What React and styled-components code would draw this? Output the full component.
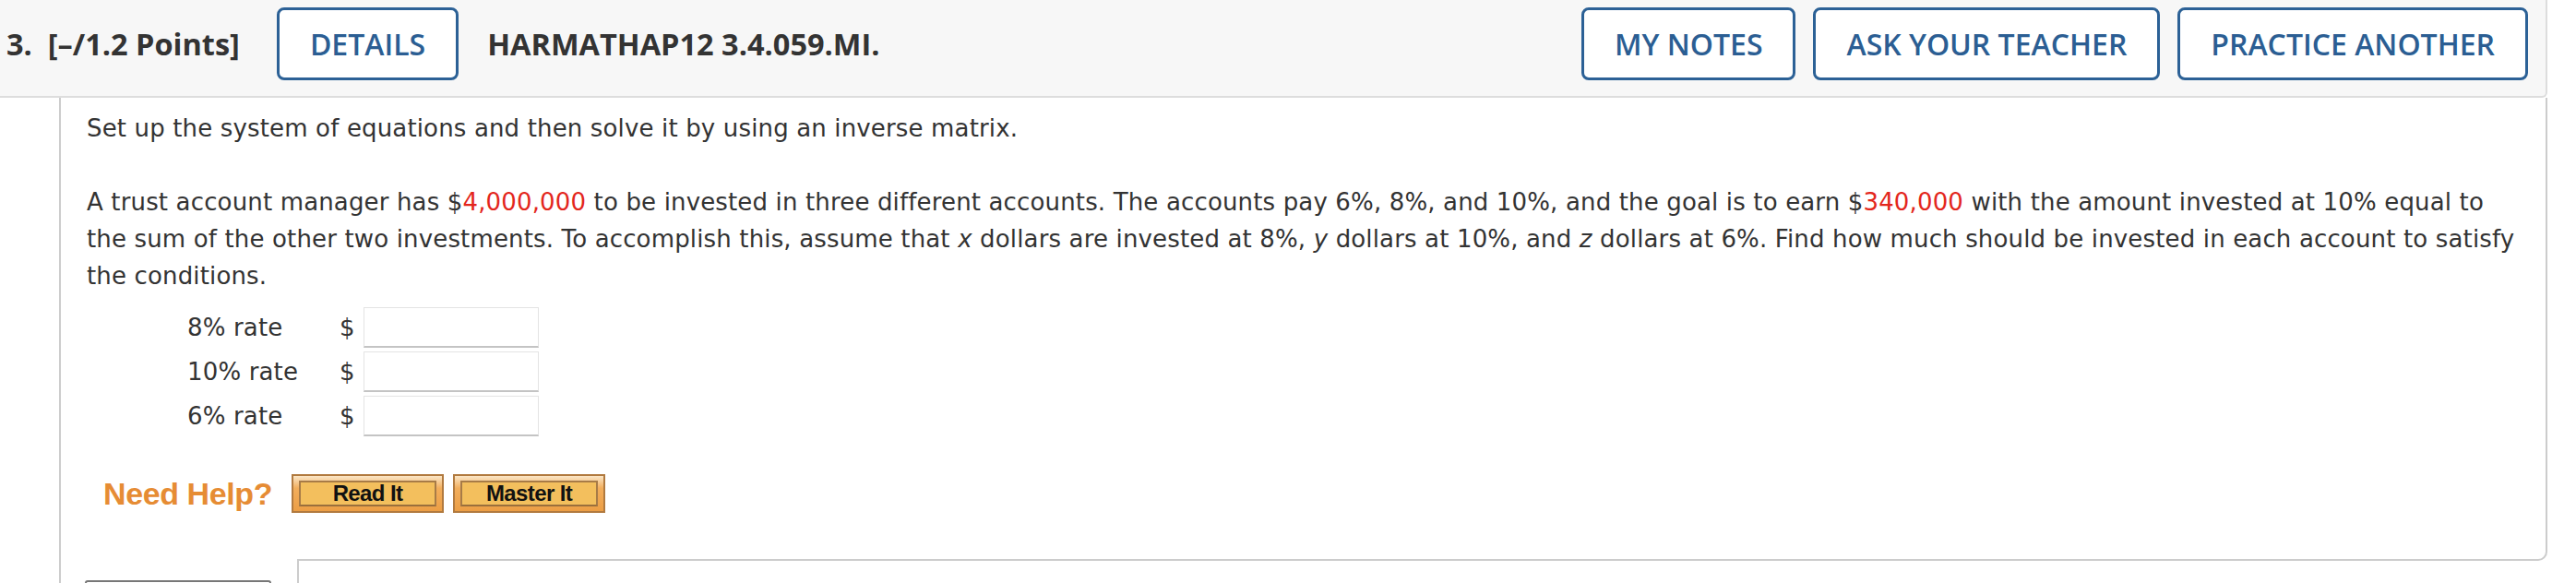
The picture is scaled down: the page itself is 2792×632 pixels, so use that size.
import React from 'react';
import styled, { createGlobalStyle } from 'styled-components';

const GlobalStyle = createGlobalStyle`
  html, body {
    margin: 0;
    padding: 0;
    width: 2792px;
    height: 632px;
    overflow: hidden;
    background: #fff;
  }
`;

const Page = styled.div`
  width: 2761px;
`;

const Header = styled.header`
  box-sizing: border-box;
  height: 106px;
  display: flex;
  align-items: center;
  padding: 8px 19px 17px 7px;
  background: #f7f7f7;
  border-bottom: 2px solid #dddddd;
  border-right: 2px solid #dddddd;
  border-bottom-right-radius: 6px;
  font-family: 'Open Sans', 'Liberation Sans', sans-serif;
  color: #333;
`;

const QuestionNumber = styled.div`
  font-size: 32.5px;
  font-weight: 700;
  margin-right: 40px;
  white-space: pre;
`;

const QuestionCode = styled.div`
  font-size: 32.5px;
  font-weight: 700;
  margin-left: 31px;
`;

const Spacer = styled.div`
  flex: 1;
`;

const Actions = styled.div`
  display: flex;
  gap: 19px;
`;

const OutlineButton = styled.button`
  box-sizing: border-box;
  height: 79px;
  padding: 0 33px;
  background: #fff;
  border: 3px solid #2c6196;
  border-radius: 8px;
  color: #2b5e93;
  font-family: 'Open Sans', 'Liberation Sans', sans-serif;
  font-size: 32px;
  font-weight: 600;
  text-transform: uppercase;
  cursor: pointer;
`;

const Body = styled.section`
  margin-left: 64px;
  border-left: 2px solid #cccccc;
`;

const Content = styled.div`
  padding: 13px 26px 40px 28px;
  border-right: 2px solid #cccccc;
  font-family: 'DejaVu Sans', Verdana, sans-serif;
  font-size: 26px;
  letter-spacing: 0.15px;
  line-height: 40px;
  color: #333;
`;

const Paragraph = styled.p`
  margin: ${({ $gap }) => ($gap ? '40px' : '0')} 0 0;
`;

const Red = styled.span`
  color: #e3261c;
`;

const AnswerGrid = styled.div`
  display: grid;
  grid-template-columns: 165px 26px 190px;
  grid-auto-rows: 48px;
  align-items: center;
  margin: 12px 0 0 109px;
  width: max-content;
`;

const RateLabel = styled.div``;

const Dollar = styled.div``;

const AmountInput = styled.input`
  box-sizing: border-box;
  width: 190px;
  height: 44px;
  margin: 0;
  border: 1px solid #e4e4e4;
  border-bottom: 2px solid #c4c4c4;
  background: #fff;
  font-family: inherit;
  font-size: 24px;
  outline: none;
`;

const HelpRow = styled.div`
  display: flex;
  align-items: center;
  margin: 39px 0 0 18px;
  height: 42px;
`;

const NeedHelp = styled.span`
  font-family: 'Liberation Sans', Arial, sans-serif;
  font-size: 34px;
  font-weight: 700;
  letter-spacing: -0.4px;
  color: #e68c34;
  margin-right: 21px;
`;

const HelpButton = styled.button`
  box-sizing: border-box;
  width: 165px;
  height: 42px;
  padding: 5px 6px 5px;
  margin-right: 10px;
  border: 2px solid #b17a3f;
  background: linear-gradient(to bottom, #fbe6c6 0%, #f2ae5c 35%, #ec9e45 100%);
  display: flex;
  cursor: pointer;
`;

const HelpFace = styled.span`
  flex: 1;
  display: flex;
  align-items: center;
  justify-content: center;
  border: 2px solid #a77b47;
  border-bottom-color: #9a6f3c;
  background: #f3bf5d;
  font-family: 'Liberation Sans', Arial, sans-serif;
  font-size: 24px;
  font-weight: 700;
  letter-spacing: -0.6px;
  color: #111;
`;

const Footer = styled.div`
  display: flex;
`;

const FooterLeft = styled.div`
  width: 256px;
  padding: 33px 0 0 26px;
  box-sizing: border-box;
`;

const SubmitTab = styled.div`
  width: 202px;
  height: 40px;
  box-sizing: border-box;
  border: 2px solid #777;
  border-radius: 3px;
`;

const FooterRight = styled.div`
  flex: 1;
  display: flex;
  flex-direction: column;
`;

const Corner = styled.div`
  height: 10px;
  border-right: 2px solid #cccccc;
  border-bottom: 2px solid #cccccc;
  border-bottom-right-radius: 10px;
`;

const LowerPanel = styled.div`
  height: 40px;
  border-left: 2px solid #cccccc;
`;

const rates = ['8% rate', '10% rate', '6% rate'];

export default function App() {
  return (
    <>
      <GlobalStyle />
      <Page>
        <Header>
          <QuestionNumber>{'3.  [–/1.2 Points]'}</QuestionNumber>
          <OutlineButton>Details</OutlineButton>
          <QuestionCode>HARMATHAP12 3.4.059.MI.</QuestionCode>
          <Spacer />
          <Actions>
            <OutlineButton>My Notes</OutlineButton>
            <OutlineButton>Ask Your Teacher</OutlineButton>
            <OutlineButton>Practice Another</OutlineButton>
          </Actions>
        </Header>
        <Body>
          <Content>
            <Paragraph>
              Set up the system of equations and then solve it by using an inverse matrix.
            </Paragraph>
            <Paragraph $gap>
              A trust account manager has $<Red>4,000,000</Red> to be invested in three
              different accounts. The accounts pay 6%, 8%, and 10%, and the goal is to earn
              $<Red>340,000</Red> with the amount invested at 10% equal to the sum of the other
              two investments. To accomplish this, assume that <i>x</i> dollars are invested at
              8%, <i>y</i> dollars at 10%, and <i>z</i> dollars at 6%. Find how much should be
              invested in each account to satisfy the conditions.
            </Paragraph>
            <AnswerGrid>
              {rates.map((r) => (
                <React.Fragment key={r}>
                  <RateLabel>{r}</RateLabel>
                  <Dollar>$</Dollar>
                  <AmountInput type="text" />
                </React.Fragment>
              ))}
            </AnswerGrid>
            <HelpRow>
              <NeedHelp>Need Help?</NeedHelp>
              <HelpButton>
                <HelpFace>Read It</HelpFace>
              </HelpButton>
              <HelpButton>
                <HelpFace>Master It</HelpFace>
              </HelpButton>
            </HelpRow>
          </Content>
          <Footer>
            <FooterLeft>
              <SubmitTab />
            </FooterLeft>
            <FooterRight>
              <Corner />
              <LowerPanel />
            </FooterRight>
          </Footer>
        </Body>
      </Page>
    </>
  );
}
